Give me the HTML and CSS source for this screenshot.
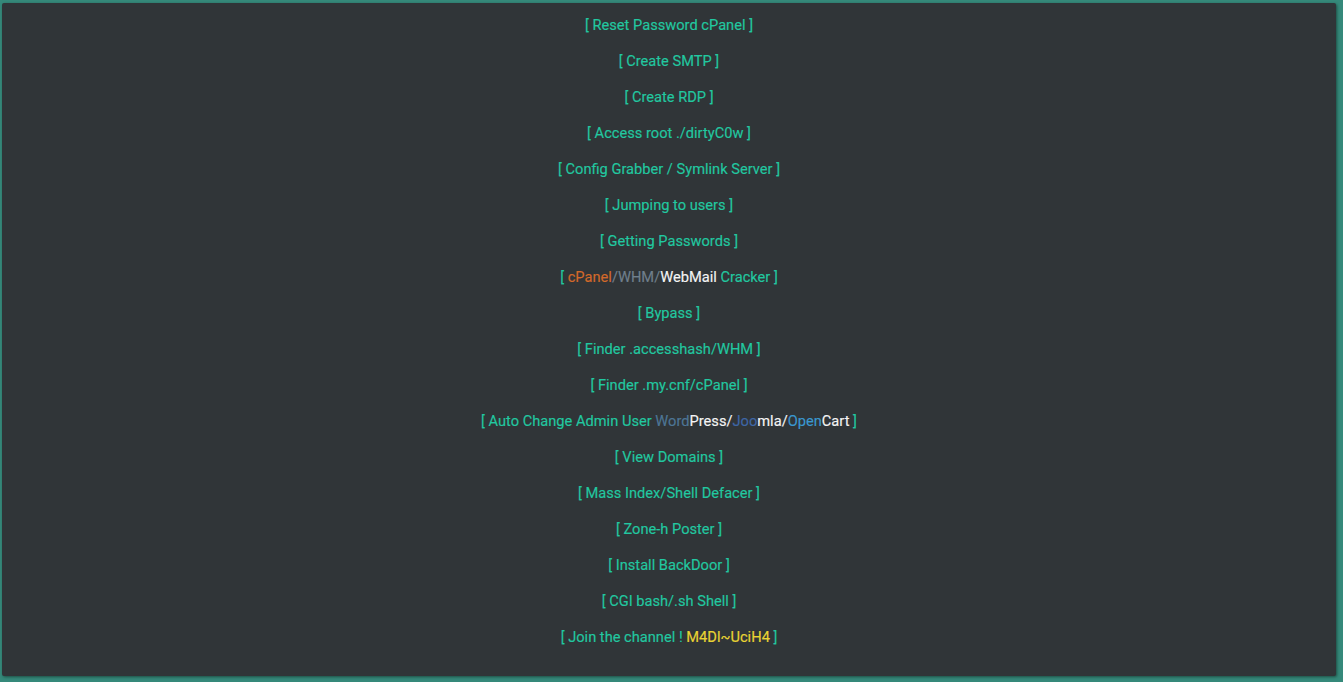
FILE: index.html
```html
<!DOCTYPE html>
<html>
<head>
<meta charset="utf-8">
<link rel="stylesheet" href="styles.css">
</head>
<body>
<div class="panel">
  <ul class="menu">
    <li>[ Reset Password cPanel ]</li>
    <li>[ Create SMTP ]</li>
    <li>[ Create RDP ]</li>
    <li>[ Access root ./dirtyC0w ]</li>
    <li>[ Config Grabber / Symlink Server ]</li>
    <li>[ Jumping to users ]</li>
    <li>[ Getting Passwords ]</li>
    <li>[ <span class="orange">cPanel</span><span class="gray">/WHM/</span><span class="white">WebMail</span> Cracker ]</li>
    <li>[ Bypass ]</li>
    <li>[ Finder .accesshash/WHM ]</li>
    <li>[ Finder .my.cnf/cPanel ]</li>
    <li>[ Auto Change Admin User <span class="wp">Word</span><span class="white">Press/</span><span class="joo">Joo</span><span class="white">mla/</span><span class="oc">Open</span><span class="white">Cart</span> ]</li>
    <li>[ View Domains ]</li>
    <li>[ Mass Index/Shell Defacer ]</li>
    <li>[ Zone-h Poster ]</li>
    <li>[ Install BackDoor ]</li>
    <li>[ CGI bash/.sh Shell ]</li>
    <li>[ Join the channel ! <span class="yellow">M4Dl~UciH4</span> ]</li>
  </ul>
</div>
</body>
</html>
```
FILE: styles.css
```css
html, body {
  margin: 0;
  padding: 0;
}
body {
  background: #35897a;
  height: 682px;
  overflow: hidden;
  font-family: Roboto, "Liberation Sans", sans-serif;
}
.panel {
  margin: 3px 7px 0 2px;
  height: 673px;
  background: #303538;
  border-radius: 2px;
  box-shadow: 1px 1px 3px rgba(0,0,0,0.45);
}
.menu {
  list-style: none;
  margin: 0;
  padding: 14px 0 0 0;
  display: flex;
  flex-direction: column;
  align-items: center;
  gap: 19px;
  font-size: 14.65px;
  line-height: 17px;
  color: #22c8a0;
  -webkit-text-stroke: 0.15px currentColor;
}
.orange { color: #d2692a; }
.gray { color: #6f7f8c; }
.white { color: #f4f4f4; }
.wp { color: #4d7596; }
.joo { color: #3e66a6; }
.oc { color: #3a98cf; }
.yellow { color: #e9d433; }
```
